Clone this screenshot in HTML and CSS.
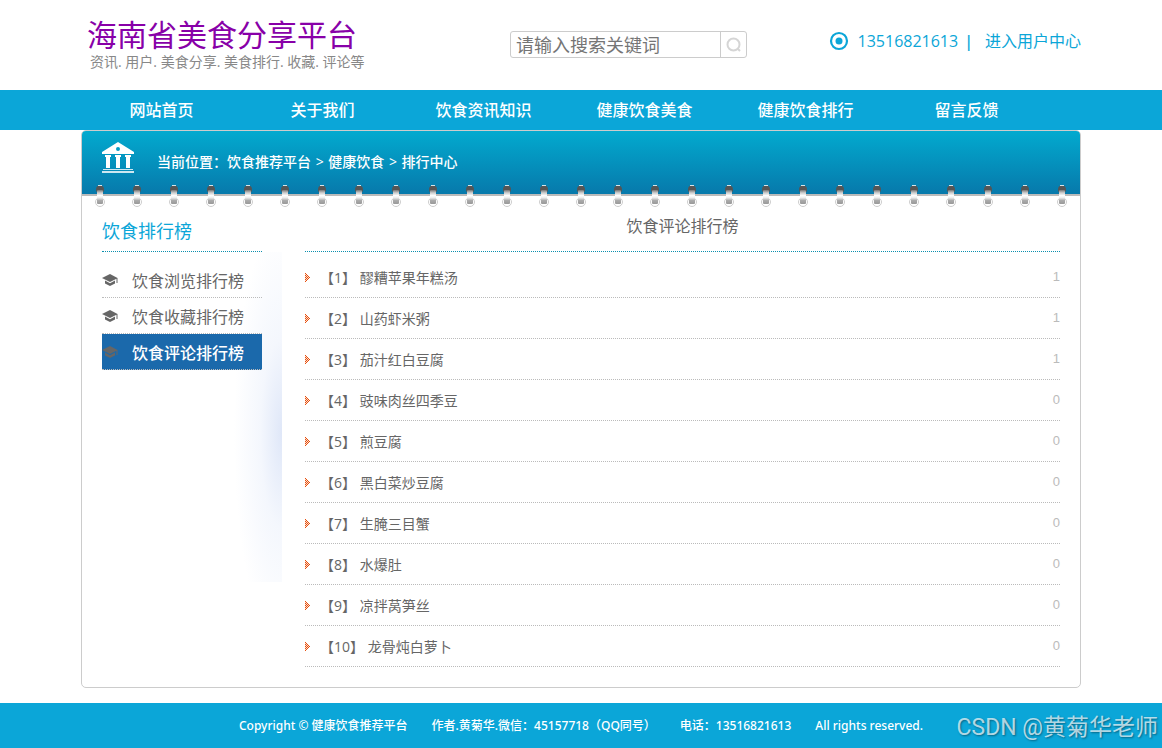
FILE: index.html
```html
<!DOCTYPE html>
<html lang="zh-CN">
<head>
    <meta charset="UTF-8">
    <meta name="viewport" content="width=device-width, initial-scale=1.0">
    <title>饮食评论排行榜</title>
    <link rel="stylesheet" href="styles.css">
</head>
<body>
    <!-- shared icons -->
    <svg class="sprite" aria-hidden="true">
        <symbol id="cap" viewBox="0 0 16 14">
            <path d="M8 1L0 5l8 4 6.500-3.300V10H15.500V5z"/>
            <path d="M3 7.600v3L8 13l5-2.400v-3L8 10.200z"/>
        </symbol>
        <symbol id="arrow" viewBox="0 0 5 9" shape-rendering="crispEdges">
            <path d="M0 0h1v1H0zM1 1h1v1H1zM0 2h1v1H0zM2 2h1v1H2zM1 3h1v1H1zM3 3h1v1H3zM0 4h1v1H0zM2 4h1v1H2zM4 4h1v1H4zM1 5h1v1H1zM3 5h1v1H3zM0 6h1v1H0zM2 6h1v1H2zM1 7h1v1H1zM0 8h1v1H0z"/>
            <path opacity=".2" d="M0 1h1v1H0zM1 2h1v1H1zM0 3h1v1H0zM2 3h1v1H2zM1 4h1v1H1zM3 4h1v1H3zM0 5h1v1H0zM2 5h1v1H2zM1 6h1v1H1zM0 7h1v1H0z"/>
        </symbol>
    </svg>

    <header class="header">
        <div class="wrap header-inner">
            <div class="logo">
                <h1 class="logo-title">海南省美食分享平台</h1>
                <p class="logo-text">资讯. 用户. 美食分享. 美食排行. 收藏. 评论等</p>
            </div>
            <form class="search">
                <input type="text" class="search-box" placeholder="请输入搜索关键词" aria-label="请输入搜索关键词">
                <button type="submit" class="search-btn" aria-label="搜索">
                    <svg width="16" height="16" viewBox="0 0 16 16" fill="none" stroke="#d5d5d5" stroke-width="2">
                        <circle cx="7.500" cy="7.500" r="6"/>
                        <path d="M11.500 11.500L14 14"/>
                    </svg>
                </button>
            </form>
            <div class="user-bar">
                <svg width="20" height="20" viewBox="0 0 20 20">
                    <circle cx="10" cy="10" r="8" fill="none" stroke="#0ba6d8" stroke-width="2.200"/>
                    <circle cx="10" cy="10" r="3.500" fill="#0ba6d8"/>
                </svg>
                <span class="phone">13516821613</span>
                <span class="divider">|</span>
                <a href="#">进入用户中心</a>
            </div>
        </div>
    </header>

    <nav class="nav">
        <div class="wrap nav-inner">
            <a href="#">网站首页</a>
            <a href="#">关于我们</a>
            <a href="#">饮食资讯知识</a>
            <a href="#">健康饮食美食</a>
            <a href="#">健康饮食排行</a>
            <a href="#">留言反馈</a>
        </div>
    </nav>

    <main class="wrap panel">
        <div class="banner">
            <svg class="banner-icon" width="32" height="32" viewBox="0 0 32 32" fill="#fff">
                <path fill-rule="evenodd" d="M16 0L0 10v2h32v-2zM16 5a2 2 0 1 1 0 4 2 2 0 0 1 0-4z"/>
                <path d="M3 13h6v2H8v11H4V15H3zM13 13h6v2h-1v11h-4V15h-1zM23 13h6v2h-1v11h-4V15h-1z"/>
                <path d="M1 27h30v1H1zM0 29h32v2H0z" opacity=".8"/>
            </svg>
            <p class="crumbs">当前位置：<a href="#">饮食推荐平台</a> <span>&gt;</span> <a href="#">健康饮食</a> <span>&gt;</span> <a href="#">排行中心</a></p>
            <svg class="rings" aria-hidden="true">
                <defs>
                    <linearGradient id="ringFill" x1="0" y1="0" x2="0" y2="1">
                        <stop offset="0" stop-color="#777"/>
                        <stop offset=".2" stop-color="#ccc"/>
                        <stop offset=".4" stop-color="#fff"/>
                        <stop offset=".55" stop-color="#eee"/>
                        <stop offset=".75" stop-color="#aaa"/>
                        <stop offset="1" stop-color="#999"/>
                    </linearGradient>
                    <pattern id="ring" width="37" height="24" patternUnits="userSpaceOnUse">
                        <circle cx="18" cy="17" r="4.500" fill="#fff" stroke="#ccc"/>
                        <circle cx="18" cy="4.500" r="4" fill="#555"/>
                        <path d="M16 .5h4" stroke="#d5e5ea"/>
                        <rect x="15" y="5" width="6" height="14" rx="1" fill="url(#ringFill)"/>
                    </pattern>
                </defs>
                <rect width="100%" height="24" fill="url(#ring)"/>
            </svg>
        </div>

        <div class="content">
            <aside class="sidebar">
                <h2 class="sidebar-title">饮食排行榜</h2>
                <div class="menu">
                    <a href="#" class="menu-item"><svg width="16" height="14"><use href="#cap"/></svg>饮食浏览排行榜</a>
                    <a href="#" class="menu-item"><svg width="16" height="14"><use href="#cap"/></svg>饮食收藏排行榜</a>
                    <a href="#" class="menu-item active"><svg width="16" height="14"><use href="#cap"/></svg>饮食评论排行榜</a>
                </div>
            </aside>

            <section class="rank">
                <h2 class="rank-title">饮食评论排行榜</h2>
                <ul class="rank-list">
                    <li><svg width="5" height="9"><use href="#arrow"/></svg><a href="#">【1】 醪糟苹果年糕汤</a><span class="count">1</span></li>
                    <li><svg width="5" height="9"><use href="#arrow"/></svg><a href="#">【2】 山药虾米粥</a><span class="count">1</span></li>
                    <li><svg width="5" height="9"><use href="#arrow"/></svg><a href="#">【3】 茄汁红白豆腐</a><span class="count">1</span></li>
                    <li><svg width="5" height="9"><use href="#arrow"/></svg><a href="#">【4】 豉味肉丝四季豆</a><span class="count">0</span></li>
                    <li><svg width="5" height="9"><use href="#arrow"/></svg><a href="#">【5】 煎豆腐</a><span class="count">0</span></li>
                    <li><svg width="5" height="9"><use href="#arrow"/></svg><a href="#">【6】 黑白菜炒豆腐</a><span class="count">0</span></li>
                    <li><svg width="5" height="9"><use href="#arrow"/></svg><a href="#">【7】 生腌三目蟹</a><span class="count">0</span></li>
                    <li><svg width="5" height="9"><use href="#arrow"/></svg><a href="#">【8】 水爆肚</a><span class="count">0</span></li>
                    <li><svg width="5" height="9"><use href="#arrow"/></svg><a href="#">【9】 凉拌莴笋丝</a><span class="count">0</span></li>
                    <li><svg width="5" height="9"><use href="#arrow"/></svg><a href="#">【10】 龙骨炖白萝卜</a><span class="count">0</span></li>
                </ul>
            </section>
        </div>
    </main>

    <footer class="footer">
        <span>Copyright © 健康饮食推荐平台</span>
        <span>作者.黄菊华.微信：45157718（QQ同号）</span>
        <span>电话：13516821613</span>
        <span>All rights reserved.</span>
        <div class="watermark">CSDN @黄菊华老师</div>
    </footer>
</body>
</html>
```
FILE: styles.css
```css
* {
    margin: 0;
    padding: 0;
    box-sizing: border-box;
}

body {
    font-family: 'Open Sans', 'Noto Sans CJK SC', sans-serif;
    font-size: 14px;
    color: #666;
    background: #fff;
}

a {
    color: inherit;
    text-decoration: none;
}

ul {
    list-style: none;
}

.sprite {
    position: absolute;
    width: 0;
    height: 0;
}

.wrap {
    max-width: 1000px;
    margin: 0 auto;
}

/* header */
.header-inner {
    display: flex;
    align-items: flex-start;
    height: 90px;
}

.logo {
    flex: 1;
    padding: 17px 0 0 6px;
}

.logo-title {
    font-size: 30px;
    line-height: 36px;
    font-weight: 400;
    color: #8800a8;
}

.logo-text {
    padding-left: 3px;
    line-height: 18px;
    color: #888;
}

.search {
    display: flex;
    width: 237px;
    height: 27px;
    margin-top: 31px;
    border: 1px solid #ccc;
    border-radius: 3px;
}

.search-box {
    flex: 1;
    min-width: 0;
    padding: 0 5px;
    border: none;
    outline: none;
    background: transparent;
    font-family: inherit;
    font-size: 18px;
    color: #666;
}

.search-box::placeholder {
    color: #757575;
}

.search-btn {
    display: flex;
    align-items: center;
    justify-content: center;
    width: 26px;
    border: none;
    border-left: 1px solid #ccc;
    background: transparent;
    cursor: pointer;
}

.user-bar {
    display: flex;
    align-items: center;
    justify-content: flex-end;
    width: 334px;
    margin-top: 29px;
    font-size: 16px;
    line-height: 24px;
    color: #0ba6d8;
}

.phone {
    margin-left: 9px;
}

.divider {
    margin: 0 12px 0 6px;
    font-weight: 600;
}

/* nav */
.nav {
    background: #0ba6d8;
}

.nav-inner {
    display: flex;
}

.nav-inner a {
    width: 161px;
    font-size: 16px;
    line-height: 40px;
    font-weight: 500;
    text-align: center;
    color: #fff;
}

/* panel */
.panel {
    border: 1px solid #ccc;
    border-radius: 5px;
}

.banner {
    position: relative;
    display: flex;
    height: 65px;
    padding-left: 20px;
    border-bottom: 2px solid #bbb;
    border-radius: 4px 4px 0 0;
    background: linear-gradient(#02aacf, #0779ab);
}

.banner-icon {
    margin-top: 11px;
}

.crumbs {
    margin: 20px 0 0 23px;
    line-height: 22px;
    font-weight: 500;
    color: #fff;
}

.crumbs span {
    margin: 0 1px;
}

/* binder rings hang over the lower edge of the banner */
.rings {
    position: absolute;
    left: 0;
    bottom: -15px;
    width: 100%;
    height: 24px;
}

.content {
    display: flex;
    padding: 15px 20px 20px;
}

/* sidebar */
.sidebar {
    width: 180px;
    margin-right: 23px;
}

.sidebar-title {
    width: 160px;
    border-bottom: 1px dotted #0b8fae;
    font-size: 18px;
    line-height: 40px;
    font-weight: 400;
    color: #0ba6d8;
}

.menu {
    min-height: 330px;
    padding: 10px 20px 0 0;
    background: radial-gradient(ellipse 48px 210px at 100% 55%, #dfe7f8, #f4f7fd 45%, #fff) no-repeat;
}

.menu-item {
    display: flex;
    align-items: center;
    height: 36px;
    border-bottom: 1px dotted #bbb;
    font-size: 16px;
}

.menu-item svg {
    margin-right: 14px;
    fill: #666;
}

.menu-item.active {
    background: #1b69ab;
    font-weight: 500;
    color: #fff;
}

/* ranking list */
.rank {
    flex: 1;
}

.rank-title {
    padding-bottom: 10px;
    margin-bottom: 5px;
    border-bottom: 1px dotted #0b8fae;
    font-size: 16px;
    line-height: 30px;
    font-weight: 400;
    text-align: center;
}

.rank-list li {
    display: flex;
    align-items: center;
    height: 41px;
    border-bottom: 1px dotted #bbb;
}

.rank-list svg {
    fill: #e8500e;
}

.rank-list a {
    flex: 1;
    margin-left: 10px;
}

.count {
    padding-bottom: 2px;
    font-family: 'Liberation Sans', sans-serif;
    font-size: 13px;
    color: #bbb;
}

/* footer */
.footer {
    position: relative;
    display: flex;
    justify-content: center;
    gap: 24px;
    margin-top: 15px;
    background: #0ba6d8;
    font-family: 'Noto Sans', 'Noto Sans CJK SC', sans-serif;
    font-size: 12px;
    line-height: 45px;
    font-weight: 500;
    color: #fff;
}

.watermark {
    position: absolute;
    right: 4px;
    bottom: 3px;
    font-family: Roboto, 'Noto Sans CJK SC', sans-serif;
    font-size: 23px;
    line-height: 34px;
    font-weight: 400;
    color: rgba(255, 255, 255, 0.7);
    text-shadow: 1px 1px 2px rgba(0, 0, 0, 0.4);
}
```
